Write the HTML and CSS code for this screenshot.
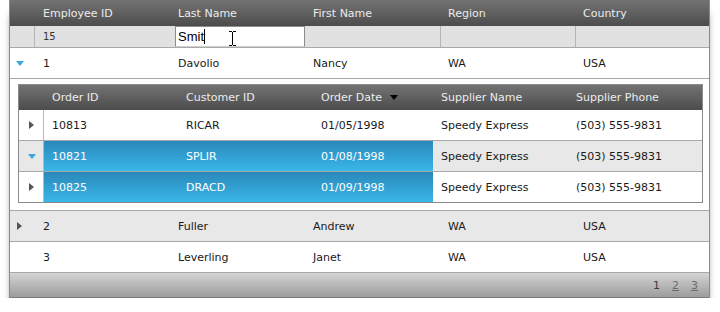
FILE: index.html
```html
<!DOCTYPE html>
<html lang="en">
<head>
    <meta charset="UTF-8">
    <title>Employees</title>
    <link rel="stylesheet" href="styles.css">
</head>
<body>
    <div class="grid">
        <div class="row head">
            <div class="ind"></div>
            <div class="cell">Employee ID</div>
            <div class="cell">Last Name</div>
            <div class="cell">First Name</div>
            <div class="cell">Region</div>
            <div class="cell">Country</div>
        </div>
        <div class="row filter">
            <div class="ind"></div>
            <div class="fcell small">15</div>
            <div class="fcell">
                <div class="textbox"><span class="caret">Smit</span>
                    <svg class="ibeam" width="9" height="15" viewBox="0 0 9 15"><path d="M1 0.5H4M5 0.5H8M4.5 1V14M1 14.5H4M5 14.5H8" stroke="#000" fill="none"/></svg>
                </div>
            </div>
            <div class="fcell"></div>
            <div class="fcell line"></div>
            <div class="fcell line"></div>
        </div>
        <div class="row data">
            <div class="ind"><i class="tri-down"></i></div>
            <div class="cell">1</div>
            <div class="cell">Davolio</div>
            <div class="cell">Nancy</div>
            <div class="cell">WA</div>
            <div class="cell">USA</div>
        </div>
        <div class="detail">
            <div class="subgrid">
                <div class="srow shead">
                    <div class="ind"></div>
                    <div class="cell">Order ID</div>
                    <div class="cell">Customer ID</div>
                    <div class="cell">Order Date <i class="sort"></i></div>
                    <div class="cell">Supplier Name</div>
                    <div class="cell">Supplier Phone</div>
                </div>
                <div class="srow">
                    <div class="ind"><i class="tri-right"></i></div>
                    <div class="cell">10813</div>
                    <div class="cell">RICAR</div>
                    <div class="cell">01/05/1998</div>
                    <div class="cell">Speedy Express</div>
                    <div class="cell">(503) 555-9831</div>
                </div>
                <div class="srow alt">
                    <div class="ind"><i class="tri-down"></i></div>
                    <div class="cell sel">10821</div>
                    <div class="cell sel">SPLIR</div>
                    <div class="cell sel">01/08/1998</div>
                    <div class="cell">Speedy Express</div>
                    <div class="cell">(503) 555-9831</div>
                </div>
                <div class="srow">
                    <div class="ind"><i class="tri-right"></i></div>
                    <div class="cell sel">10825</div>
                    <div class="cell sel">DRACD</div>
                    <div class="cell sel">01/09/1998</div>
                    <div class="cell">Speedy Express</div>
                    <div class="cell">(503) 555-9831</div>
                </div>
            </div>
        </div>
        <div class="row data alt">
            <div class="ind"><i class="tri-right"></i></div>
            <div class="cell">2</div>
            <div class="cell">Fuller</div>
            <div class="cell">Andrew</div>
            <div class="cell">WA</div>
            <div class="cell">USA</div>
        </div>
        <div class="row data">
            <div class="ind"></div>
            <div class="cell">3</div>
            <div class="cell">Leverling</div>
            <div class="cell">Janet</div>
            <div class="cell">WA</div>
            <div class="cell">USA</div>
        </div>
        <div class="pager">
            <span class="cur">1</span>
            <a href="#">2</a>
            <a href="#">3</a>
        </div>
    </div>
</body>
</html>
```

FILE: styles.css
```css
body {
    margin: 0;
    background: #fff;
    font-family: "DejaVu Sans", sans-serif;
    font-size: 11px;
    color: #1a1a1a;
}

.grid {
    width: 701px;
    margin-left: 9px;
    border-left: 1px solid #8a8a8a;
    border-right: 1px solid #8a8a8a;
    box-sizing: border-box;
    box-shadow: 0 10px 8px -4px rgba(0, 0, 0, 0.85);
}

.row {
    display: grid;
    grid-template-columns: 25px repeat(4, 135px) 1fr;
}

.cell {
    padding-left: 8px;
    display: flex;
    align-items: center;
    white-space: nowrap;
}

.ind {
    display: flex;
    align-items: center;
    justify-content: center;
}

/* header */

.head {
    height: 26px;
    padding-top: 1px;
    box-sizing: border-box;
    background: linear-gradient(#737373, #4c4c4c);
    color: #ececec;
}

/* filter row */

.filter {
    height: 21px;
    background: #e1e1e1;
    border-bottom: 1px solid #a9a9a9;
}
.filter .ind {
    border-right: 1px solid #b4b4b4;
}
.fcell {
    padding-left: 8px;
    display: flex;
    align-items: center;
}
.fcell.line {
    border-left: 1px solid #b4b4b4;
}
.fcell.small {
    font-size: 10px;
    color: #333;
}
.textbox {
    position: relative;
    box-sizing: border-box;
    width: 135px;
    height: 21px;
    margin-left: -3px;
    padding-left: 2px;
    background: #fff;
    border: 1px solid #8c8c8c;
    border-bottom-color: #d0d0d0;
    font-family: "Liberation Sans", Arial, sans-serif;
    font-size: 13px;
    line-height: 19px;
    color: #000;
}
.caret {
    border-right: 1px solid #000;
}
.ibeam {
    position: absolute;
    left: 52px;
    top: 4px;
}

/* data rows */

.data {
    height: 30px;
    background: #fff;
    border-bottom: 1px solid #a8a8a8;
}
.data.alt {
    background: #e8e8e8;
}

.tri-down {
    width: 0;
    height: 0;
    border-left: 4px solid transparent;
    border-right: 4px solid transparent;
    border-top: 5px solid #38a9dc;
    margin-left: -5px;
}
.tri-right {
    width: 0;
    height: 0;
    border-top: 4px solid transparent;
    border-bottom: 4px solid transparent;
    border-left: 5px solid #555;
    margin-left: -7px;
}

/* detail */

.detail {
    padding: 5px 6px 7px 8px;
    border-bottom: 1px solid #a8a8a8;
    background: #fff;
}
.subgrid {
    border: 1px solid #8a8a8a;
}
.srow {
    display: grid;
    grid-template-columns: 25px 134px 135px 120px 135px 1fr;
    height: 30px;
    background: #fff;
    border-bottom: 1px solid #a8a8a8;
}
.srow:last-child {
    border-bottom: none;
}
.srow.shead {
    height: 25px;
    border-bottom: none;
    background: linear-gradient(#737373, #4c4c4c);
    color: #ececec;
}
.srow.alt {
    background: #e8e8e8;
}
.srow .tri-right {
    margin-left: 0;
}
.srow .tri-down {
    margin-left: 2px;
}
.srow .ind {
    border-right: 1px solid #b8b8b8;
}
.srow.shead .ind {
    border-right: none;
}
.srow .sel {
    background: linear-gradient(#2a88bb, #3ab6e8);
    color: #fff;
}

.sort {
    display: inline-block;
    width: 0;
    height: 0;
    margin-left: 8px;
    border-left: 4px solid transparent;
    border-right: 4px solid transparent;
    border-top: 5px solid #000;
}

/* footer */

.pager {
    height: 24px;
    display: flex;
    align-items: center;
    justify-content: flex-end;
    gap: 12px;
    padding-right: 11px;
    background: linear-gradient(#d4d4d4, #9c9c9c);
    border-bottom: 1px solid #7c7c7c;
    font-size: 11px;
}
.pager .cur {
    color: #3a3a3a;
}
.pager a {
    color: #6a6a6a;
}
```
